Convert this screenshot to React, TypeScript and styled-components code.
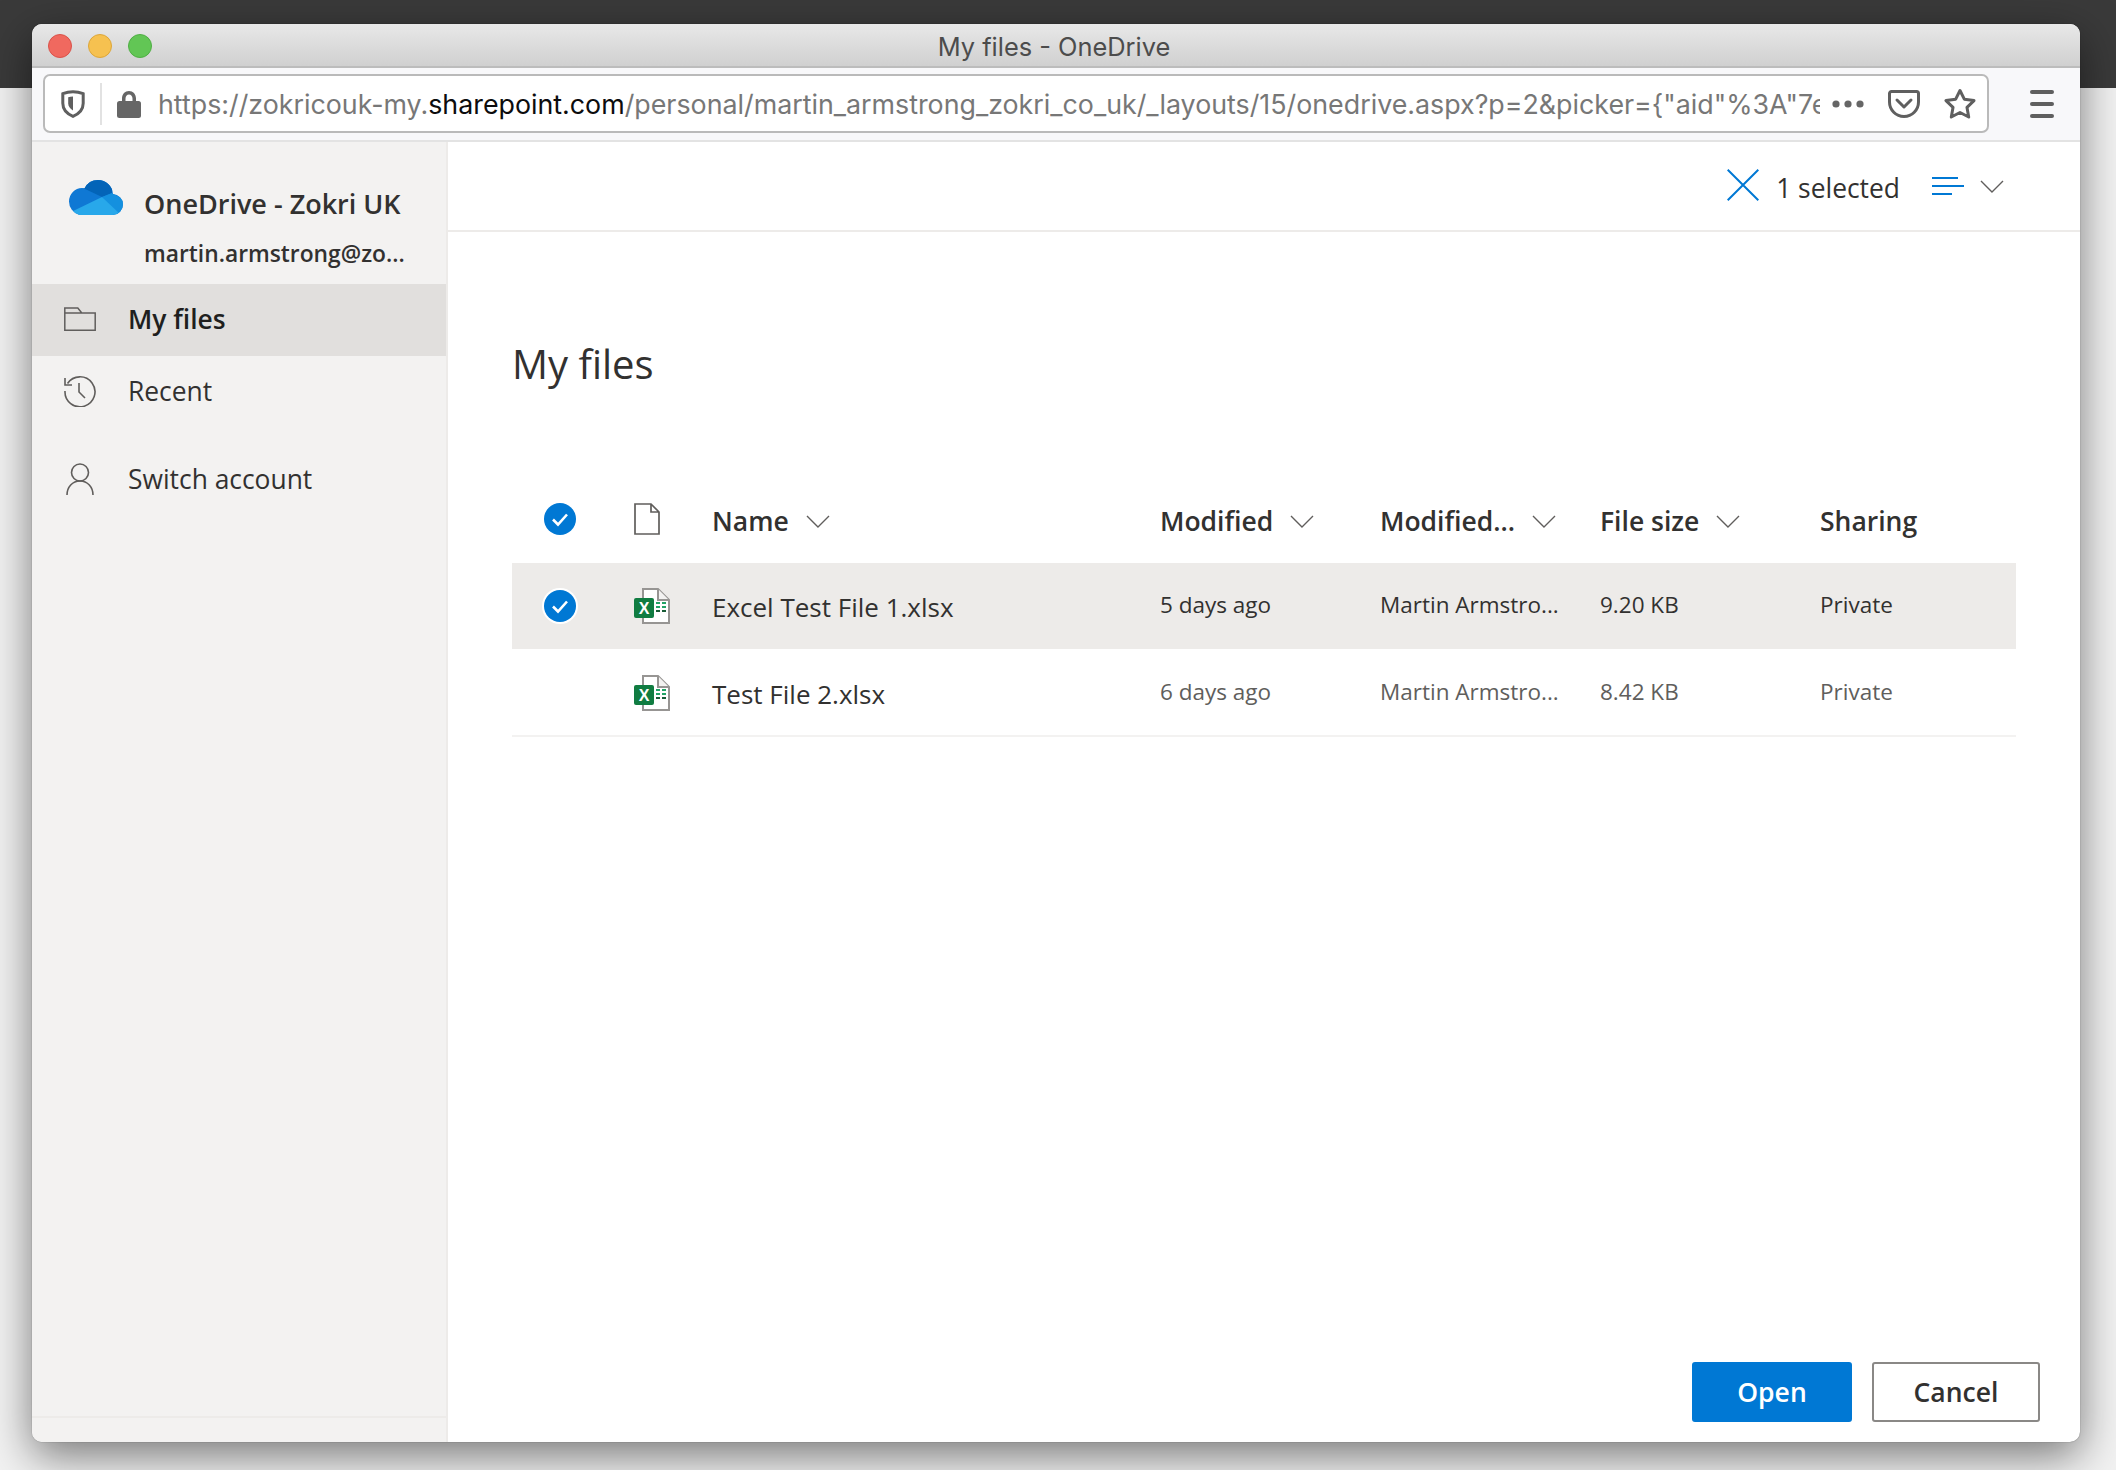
import React from "react"
import styled, { createGlobalStyle } from "styled-components"

const GlobalStyle = createGlobalStyle`
  html, body {
    margin: 0;
    padding: 0;
  }
  body {
    font-family: "Open Sans", "Noto Sans", sans-serif;
  }
`

const files = [
  { name: "Excel Test File 1.xlsx", modified: "5 days ago", by: "Martin Armstro...", size: "9.20 KB", sharing: "Private", selected: true },
  { name: "Test File 2.xlsx", modified: "6 days ago", by: "Martin Armstro...", size: "8.42 KB", sharing: "Private", selected: false },
]

const columns = [
  { label: "Modified", sortable: true },
  { label: "Modified...", sortable: true },
  { label: "File size", sortable: true },
  { label: "Sharing", sortable: false },
]

const Chevron = ({ color = "#605e5c" }: { color?: string }) => (
  <svg width="24" height="13" viewBox="0 0 24 13" fill="none">
    <path d="M1 1l11 11L23 1" stroke={color} strokeWidth="1.4" />
  </svg>
)

const CheckCircle = ({ ring }: { ring?: boolean }) => (
  <svg width="36" height="36" viewBox="0 0 36 36">
    {ring && <circle cx="18" cy="18" r="18" fill="#fff" />}
    <circle cx="18" cy="18" r="16" fill="#0078d4" />
    <path d="M11 18.500l5 5 9-10" fill="none" stroke="#fff" strokeWidth="2.6" />
  </svg>
)

const ExcelIcon = () => (
  <svg width="36" height="36" viewBox="0 0 36 36">
    <path d="M9 1h15l11 11v23H9z" fill="#fff" stroke="#979593" strokeWidth="2" />
    <path d="M24 1v11h11" fill="#f3f2f1" stroke="#979593" strokeWidth="2" />
    <rect x="0" y="10" width="20" height="20" rx="2" fill="#107c41" />
    <text x="10" y="26" fontFamily="Liberation Sans, sans-serif" fontSize="16" fontWeight="700" fill="#fff" textAnchor="middle">X</text>
    <path d="M22 14h4v2h-4zM28 14h4v2h-4zM22 18h4v2h-4zM28 18h4v2h-4z" fill="#21a366" />
    <path d="M22 22h4v2h-4zM28 22h4v2h-4z" fill="#185c37" />
  </svg>
)

const OneDriveLogo = () => (
  <svg width="54" height="35" viewBox="0 0 54 35">
    <defs>
      <clipPath id="cloud">
        <circle cx="29" cy="15" r="15" />
        <ellipse cx="13" cy="21.500" rx="13" ry="13.500" />
        <circle cx="43.500" cy="24.500" r="10.500" />
        <rect x="10" y="15" width="34" height="20" />
      </clipPath>
    </defs>
    <g clipPath="url(#cloud)">
      <rect width="54" height="35" fill="#0f78d4" />
      <path d="M14 8l19 9 10-4V0H14z" fill="#0364b8" />
      <path d="M33 17l10-4 11 6v16h-5z" fill="#1490df" />
      <path d="M0 33l33-16 19 18H0z" fill="#28a8ea" />
    </g>
  </svg>
)

const App = () => {
  return (
    <Page>
      <GlobalStyle />
      <Win>
        <TitleBar>
          <Lights>
            <Light $bg="#f0695f" $edge="#d9524a" />
            <Light $bg="#f6c150" $edge="#dca63a" />
            <Light $bg="#62c655" $edge="#4fae44" />
          </Lights>
          <WinTitle>My files - OneDrive</WinTitle>
        </TitleBar>

        <Toolbar>
          <UrlBar>
            <svg width="24" height="28" viewBox="0 0 24 28" fill="none">
              <path d="M12 1.700c3.500 0 7 .7 10.200 2v9.500c0 6-4 10.500-10.200 13.100C5.800 23.700 1.800 19.200 1.800 13.200V3.700C5 2.400 8.500 1.700 12 1.700z" stroke="#5f5f5f" strokeWidth="3" />
              <path d="M12 6.500c-1.700 0-3.300.2-4.800.7v6c0 3 1.800 5.500 4.800 7.300z" fill="#5f5f5f" />
            </svg>
            <UrlDivider />
            <svg width="24" height="28" viewBox="0 0 24 28">
              <path d="M5 12V8.500C5 4 8 1 12 1s7 3 7 7.500V12h-3.500V8.500c0-2.300-1.400-4-3.500-4s-3.500 1.700-3.500 4V12z" fill="#666" />
              <rect x="0" y="11" width="24" height="17" rx="2.500" fill="#666" />
            </svg>
            <UrlText>
              https://zokricouk-my.<strong>sharepoint.com</strong>/personal/martin_armstrong_zokri_co_uk/_layouts/15/onedrive.aspx?p=2&amp;picker={"{"}"aid"%3A"7e
            </UrlText>
            <UrlActions>
              <svg width="32" height="8" viewBox="0 0 32 8" fill="#666">
                <circle cx="4" cy="4" r="3.600" />
                <circle cx="16" cy="4" r="3.600" />
                <circle cx="28" cy="4" r="3.600" />
              </svg>
              <svg width="32" height="28" viewBox="0 0 32 28" fill="none">
                <path d="M3.500 1.500h25a2 2 0 0 1 2 2v8.500c0 8-6.500 14.500-14.500 14.500S1.500 20 1.500 12V3.500a2 2 0 0 1 2-2z" stroke="#5f5f5f" strokeWidth="3" />
                <path d="M9 10l7 7 7-7" stroke="#5f5f5f" strokeWidth="3" strokeLinecap="round" strokeLinejoin="round" />
              </svg>
              <svg width="32" height="32" viewBox="0 0 32 32" fill="none">
                <path d="M16 2.500l4.300 8.700 9.700 1.400-7 6.800 1.700 9.600-8.700-4.500-8.700 4.500 1.700-9.600-7-6.800 9.700-1.400z" stroke="#5f5f5f" strokeWidth="3" strokeLinejoin="round" />
              </svg>
            </UrlActions>
          </UrlBar>
          <Hamburger>
            <span />
            <span />
            <span />
          </Hamburger>
        </Toolbar>

        <Body>
          <Sidebar>
            <SideScroll>
              <Account>
                <OneDriveLogo />
                <AccountText>
                  <AccountName>OneDrive - Zokri UK</AccountName>
                  <AccountMail>martin.armstrong@zo...</AccountMail>
                </AccountText>
              </Account>
              <NavRow $active>
                <svg width="32" height="24" viewBox="0 0 32 24" fill="none">
                  <path d="M.8 23.200V1h13l4 5h13.400v17.200zM.8 6h17" stroke="#605e5c" strokeWidth="1.500" />
                </svg>
                My files
              </NavRow>
              <NavRow>
                <svg width="32" height="32" viewBox="0 0 32 32" fill="none">
                  <path d="M3.500 8.500A15 15 0 1 1 1 16" stroke="#605e5c" strokeWidth="1.600" />
                  <path d="M1 3v7h7M15 8v9l6 6" stroke="#605e5c" strokeWidth="1.600" />
                </svg>
                Recent
              </NavRow>
              <SwitchRow>
                <svg width="32" height="32" viewBox="0 0 32 32" fill="none">
                  <circle cx="16" cy="9.500" r="8.500" stroke="#605e5c" strokeWidth="1.600" />
                  <path d="M3 32c0-8 5.500-14 13-14s13 6 13 14" stroke="#605e5c" strokeWidth="1.600" />
                </svg>
                Switch account
              </SwitchRow>
            </SideScroll>
            <SideFoot />
          </Sidebar>

          <Main>
            <CommandBar>
              <CloseSelection>
                <svg width="32" height="32" viewBox="0 0 32 32" fill="none">
                  <path d="M.7.700l30.600 30.600M31.300.700L.7 31.300" stroke="#0078d4" strokeWidth="2" />
                </svg>
              </CloseSelection>
              <SelectedCount>1 selected</SelectedCount>
              <svg width="32" height="18" viewBox="0 0 32 18" fill="none">
                <path d="M0 1h26M0 9h32M0 17h20" stroke="#0078d4" strokeWidth="2" />
              </svg>
              <FilterChevron>
                <Chevron />
              </FilterChevron>
            </CommandBar>

            <Content>
              <Heading>My files</Heading>
              <Table>
                <HeaderRow>
                  <CheckCell>
                    <CheckCircle />
                  </CheckCell>
                  <IconCell>
                    <svg width="26" height="32" viewBox="0 0 26 32" fill="none">
                      <path d="M1 1h16l8 8v22H1zM17 1v8h8" stroke="#605e5c" strokeWidth="1.700" />
                    </svg>
                  </IconCell>
                  <HeadCell>
                    Name
                    <Chevron />
                  </HeadCell>
                  {columns.map((c) => (
                    <HeadCell key={c.label}>
                      {c.label}
                      {c.sortable && <Chevron />}
                    </HeadCell>
                  ))}
                </HeaderRow>
                {files.map((f) => (
                  <FileRow key={f.name} $selected={f.selected}>
                    <CheckCell>{f.selected && <CheckCircle ring />}</CheckCell>
                    <IconCell>
                      <ExcelIcon />
                    </IconCell>
                    <NameCell>{f.name}</NameCell>
                    <Cell $selected={f.selected}>{f.modified}</Cell>
                    <Cell $selected={f.selected}>{f.by}</Cell>
                    <Cell $selected={f.selected}>{f.size}</Cell>
                    <Cell $selected={f.selected}>{f.sharing}</Cell>
                  </FileRow>
                ))}
              </Table>
            </Content>

            <Footer>
              <PrimaryButton>Open</PrimaryButton>
              <SecondaryButton>Cancel</SecondaryButton>
            </Footer>
          </Main>
        </Body>
      </Win>
    </Page>
  )
}

const Page = styled.div`
  width: 2116px;
  height: 1470px;
  box-sizing: border-box;
  padding: 24px 36px 28px 32px;
  overflow: hidden;
  background: linear-gradient(#3a3a3a 88px, #f2f2f2 88px);
`

const Win = styled.div`
  height: 100%;
  display: flex;
  flex-direction: column;
  border-radius: 10px;
  overflow: hidden;
  background: #fff;
  box-shadow: 0 14px 44px rgba(0, 0, 0, 0.5), 0 0 1px rgba(0, 0, 0, 0.6);
`

const TitleBar = styled.div`
  height: 44px;
  flex: none;
  box-sizing: border-box;
  position: relative;
  display: flex;
  align-items: center;
  justify-content: center;
  padding: 2px 4px 0 0;
  background: linear-gradient(#e8e8e8, #d0d0d0);
  border-bottom: 2px solid #bcbcbc;
`

const Lights = styled.div`
  position: absolute;
  left: 16px;
  top: 10px;
  display: flex;
  gap: 16px;
`

const Light = styled.span<{ $bg: string; $edge: string }>`
  width: 24px;
  height: 24px;
  box-sizing: border-box;
  border-radius: 50%;
  background: ${(p) => p.$bg};
  border: 1px solid ${(p) => p.$edge};
`

const WinTitle = styled.div`
  font-family: "Inter", "Liberation Sans", sans-serif;
  font-size: 25.4px;
  color: #4c4c4c;
`

const Toolbar = styled.div`
  height: 74px;
  flex: none;
  box-sizing: border-box;
  display: flex;
  align-items: center;
  padding: 6px 26px 7px 11px;
  background: #f8f8fa;
  border-bottom: 2px solid #e3e3e3;
`

const UrlBar = styled.div`
  width: 1946px;
  height: 59px;
  box-sizing: border-box;
  display: flex;
  align-items: center;
  padding: 0 11px 0 16px;
  background: #fff;
  border: 2px solid #bababa;
  border-radius: 7px;
`

const UrlDivider = styled.div`
  width: 2px;
  height: 42px;
  margin: 0 15px 0 15px;
  background: #e2e2e2;
`

const UrlText = styled.div`
  flex: 1;
  min-width: 0;
  margin-left: 17px;
  overflow: hidden;
  white-space: nowrap;
  font-family: "Inter", "Liberation Sans", sans-serif;
  font-size: 26.8px;
  color: #777;

  strong {
    font-weight: 400;
    color: #0c0c0d;
  }
`

const UrlActions = styled.div`
  display: flex;
  align-items: center;
  gap: 24px;
  margin-left: 12px;
`

const Hamburger = styled.div`
  margin-left: auto;
  width: 24px;
  display: flex;
  flex-direction: column;
  gap: 8px;

  span {
    height: 4px;
    border-radius: 2px;
    background: #5f5f5f;
  }
`

const Body = styled.div`
  flex: 1;
  min-height: 0;
  display: flex;
`

const Sidebar = styled.aside`
  width: 416px;
  flex: none;
  box-sizing: border-box;
  display: flex;
  flex-direction: column;
  background: #f3f2f1;
  border-right: 2px solid #edebe9;
`

const SideScroll = styled.div`
  flex: 1;
`

const SideFoot = styled.div`
  height: 24px;
  border-top: 2px solid #edebe9;
`

const Account = styled.div`
  height: 142px;
  box-sizing: border-box;
  display: flex;
  align-items: flex-start;
  gap: 21px;
  padding: 38px 20px 0 37px;
`

const AccountText = styled.div`
  display: flex;
  flex-direction: column;
  gap: 16px;
  margin-top: 6px;
`

const AccountName = styled.div`
  font-size: 27px;
  line-height: 36px;
  font-weight: 600;
  color: #323130;
`

const AccountMail = styled.div`
  font-size: 22.8px;
  line-height: 32px;
  font-weight: 600;
  color: #323130;
`

const NavRow = styled.div<{ $active?: boolean }>`
  height: 72px;
  box-sizing: border-box;
  display: flex;
  align-items: center;
  gap: 32px;
  padding: 0 0 2px 32px;
  font-size: 26.4px;
  font-weight: ${(p) => (p.$active ? 600 : 400)};
  color: ${(p) => (p.$active ? "#201f1e" : "#323130")};
  background: ${(p) => (p.$active ? "#e1dfdd" : "transparent")};
`

const SwitchRow = styled(NavRow)`
  margin-top: 16px;
`

const Main = styled.main`
  flex: 1;
  min-width: 0;
  display: flex;
  flex-direction: column;
`

const CommandBar = styled.div`
  height: 90px;
  flex: none;
  box-sizing: border-box;
  display: flex;
  align-items: center;
  padding: 0 76px 0 0;
  justify-content: flex-end;
  border-bottom: 2px solid #edebe9;
`

const CloseSelection = styled.div`
  display: flex;
  margin-top: -2px;
`

const SelectedCount = styled.div`
  margin: 3px 32px 0 17px;
  font-size: 26.4px;
  color: #323130;
`

const FilterChevron = styled.div`
  margin-left: 16px;
  display: flex;
`

const Content = styled.div`
  flex: 1;
  padding: 0 64px;
`

const Heading = styled.h1`
  margin: 104px 0 0;
  font-size: 40px;
  line-height: 56px;
  font-weight: 500;
  color: #323130;
`

const Table = styled.div`
  margin-top: 97px;
`

const rowGrid = `
  display: grid;
  grid-template-columns: 122px 78px 448px 220px 220px 220px 1fr;
  align-items: center;
`

const HeaderRow = styled.div`
  ${rowGrid}
  height: 74px;
  box-sizing: border-box;
  padding-bottom: 14px;
`

const FileRow = styled.div<{ $selected?: boolean }>`
  ${rowGrid}
  height: ${(p) => (p.$selected ? 86 : 88)}px;
  box-sizing: border-box;
  padding-top: 2px;
  background: ${(p) => (p.$selected ? "#edebe9" : "transparent")};
  border-bottom: 2px solid ${(p) => (p.$selected ? "#edebe9" : "#f3f2f1")};
`

const CheckCell = styled.div`
  padding-left: 30px;
  display: flex;
  align-items: center;
`

const IconCell = styled.div`
  display: flex;
  align-items: center;
`

const HeadCell = styled.div`
  display: flex;
  align-items: center;
  gap: 17px;
  padding-top: 4px;
  font-size: 26.5px;
  line-height: 36px;
  font-weight: 600;
  color: #323130;
`

const NameCell = styled.div`
  padding-top: 1px;
  font-size: 26px;
  color: #323130;
`

const Cell = styled.div<{ $selected?: boolean }>`
  padding-bottom: 4px;
  font-size: 22.5px;
  color: ${(p) => (p.$selected ? "#323130" : "#605e5c")};
`

const Footer = styled.div`
  flex: none;
  display: flex;
  justify-content: flex-end;
  gap: 20px;
  padding: 0 40px 20px 0;
`

const BaseButton = styled.button`
  height: 60px;
  box-sizing: border-box;
  border-radius: 3px;
  font-family: inherit;
  font-size: 26.5px;
  font-weight: 600;
`

const PrimaryButton = styled(BaseButton)`
  width: 160px;
  color: #fff;
  background: #0078d4;
  border: 2px solid #0078d4;
`

const SecondaryButton = styled(BaseButton)`
  width: 168px;
  color: #323130;
  background: #fff;
  border: 2px solid #8a8886;
`

export default App
